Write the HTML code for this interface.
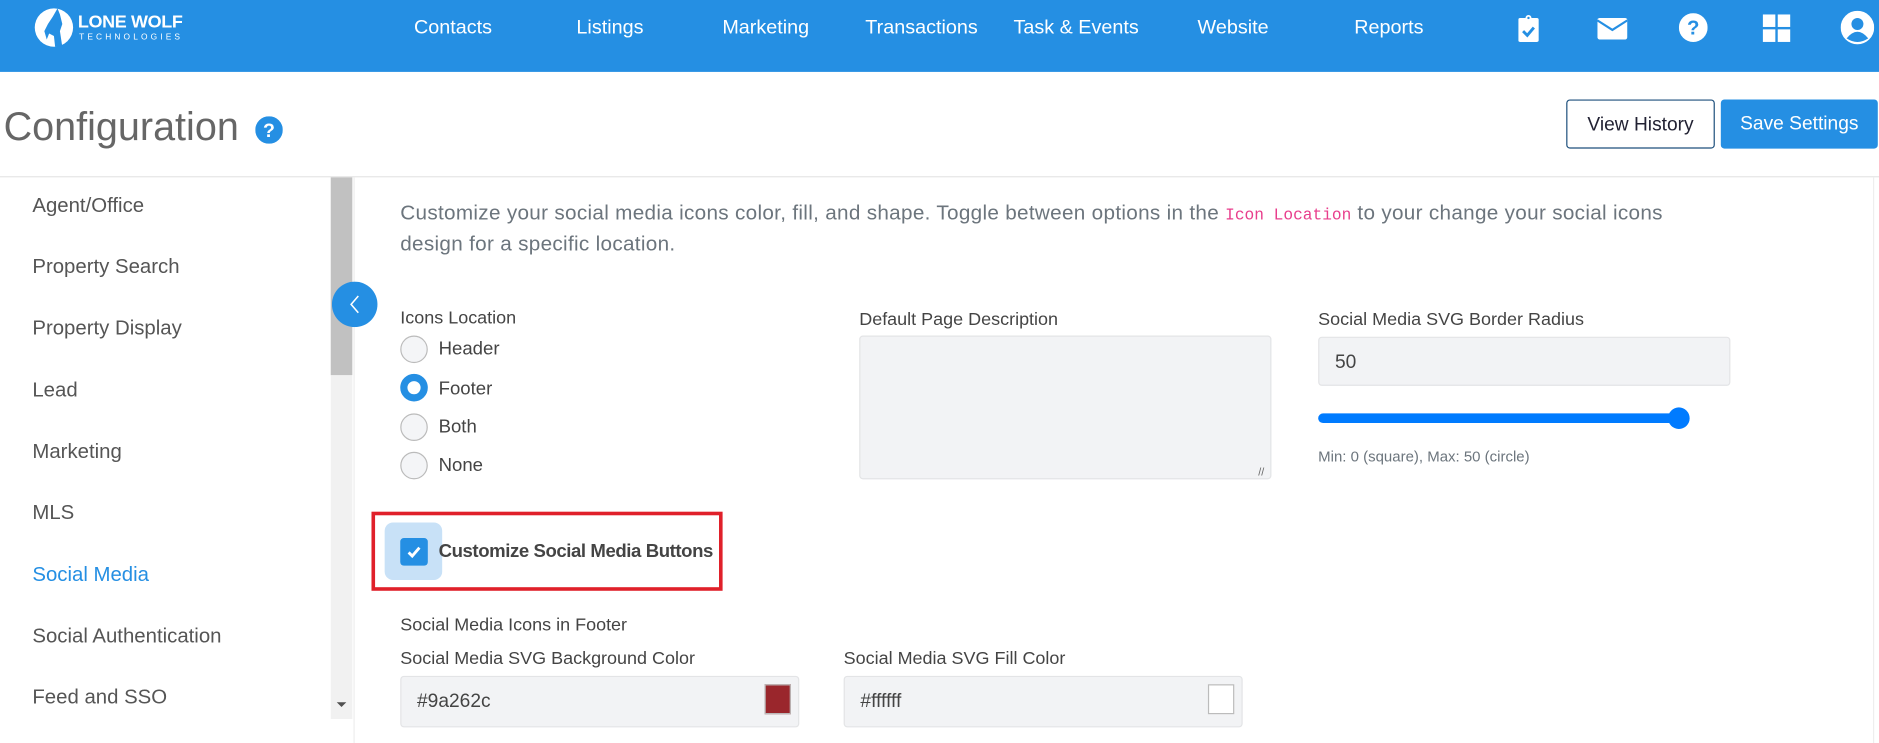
<!DOCTYPE html>
<html><head><meta charset="utf-8">
<style>
*{box-sizing:border-box;margin:0;padding:0}
html,body{width:1879px;height:743px;overflow:hidden;background:#fff}
#s{position:absolute;left:0;top:0;width:1568px;height:620px;transform:scale(1.19834);transform-origin:0 0;font-family:"Liberation Sans",sans-serif}
.a{position:absolute;white-space:nowrap}
.hdr{position:absolute;left:0;top:0;width:1568px;height:60px;background:#258fe3}
.nav{position:absolute;top:14px;color:#fff;font-size:16.5px;transform:translateX(-50%)}
.side{position:absolute;left:27px;font-size:17px;color:#555}
.radio{position:absolute;left:334px;width:23px;height:23px;border-radius:50%;border:1px solid #bbb;background:#f4f5f7}
.rl{position:absolute;left:366px;font-size:15.5px;color:#444}
.lbl{position:absolute;font-size:15px;color:#444}
.inp{position:absolute;background:#f2f3f5;border:1px solid #e3e4e6;border-radius:3px}
</style></head><body><div id="s">
<div class="hdr">
  <svg class="a" style="left:28px;top:6px" width="34" height="34" viewBox="0 0 34 34"><circle cx="17" cy="17" r="16" fill="#fff"/><path d="M20 1 L22 6 L24 14 L22 20 L24 33 L18 33 L17 24 L13 22 L11 27 L9 20 L12 14 L16 8 Z" fill="#258fe3"/></svg>
  <div class="a" style="left:65px;top:10px;color:#fff;font-size:15px;font-weight:bold;letter-spacing:-0.3px">LONE WOLF</div>
  <div class="a" style="left:66px;top:28px;color:#fff;font-size:7px;letter-spacing:2.6px">TECHNOLOGIES</div>
  <div class="nav" style="left:378px">Contacts</div>
  <div class="nav" style="left:509px">Listings</div>
  <div class="nav" style="left:639px">Marketing</div>
  <div class="nav" style="left:769px">Transactions</div>
  <div class="nav" style="left:898px">Task &amp; Events</div>
  <div class="nav" style="left:1029px">Website</div>
  <div class="nav" style="left:1159px">Reports</div>
  <svg class="a" style="left:1267px;top:12px" width="18" height="24" viewBox="0 0 18 24"><rect x="0" y="3" width="17" height="20" rx="1.5" fill="#fff"/><circle cx="8.5" cy="3" r="2.5" fill="#fff"/><circle cx="8.5" cy="3" r="1" fill="#258fe3"/><path d="M4 14 L7.5 17.5 L13 11" stroke="#258fe3" stroke-width="2.4" fill="none"/></svg>
  <svg class="a" style="left:1333px;top:15px" width="25" height="18" viewBox="0 0 25 18"><rect width="25" height="18" rx="2" fill="#fff"/><path d="M0 2 L12.5 10 L25 2" stroke="#258fe3" stroke-width="1.8" fill="none"/></svg>
  <svg class="a" style="left:1401px;top:11px" width="24" height="24" viewBox="0 0 24 24"><circle cx="12" cy="12" r="12" fill="#fff"/><text x="12" y="18" text-anchor="middle" font-family="Liberation Sans" font-weight="bold" font-size="17" fill="#258fe3">?</text></svg>
  <svg class="a" style="left:1471px;top:12px" width="23" height="23" viewBox="0 0 23 23"><rect width="10.5" height="10.5" fill="#fff"/><rect x="12.5" width="10.5" height="10.5" fill="#fff"/><rect y="12.5" width="10.5" height="10.5" fill="#fff"/><rect x="12.5" y="12.5" width="10.5" height="10.5" fill="#fff"/></svg>
  <svg class="a" style="left:1536px;top:9px" width="28" height="28" viewBox="0 0 28 28"><circle cx="14" cy="14" r="14" fill="#fff"/><circle cx="14" cy="11" r="5" fill="#258fe3"/><path d="M5 23 Q14 12 23 23 Q14 29 5 23Z" fill="#258fe3"/></svg>
</div>
<div class="a" style="left:3px;top:87px;font-size:33px;color:#666">Configuration</div>
<svg class="a" style="left:213px;top:97px" width="23" height="23" viewBox="0 0 24 24"><circle cx="12" cy="12" r="12" fill="#258fe3"/><text x="12" y="18" text-anchor="middle" font-family="Liberation Sans" font-weight="bold" font-size="17" fill="#fff">?</text></svg>
<div class="a" style="left:1307px;top:83px;width:124px;height:41px;border:1px solid #1d4f7c;border-radius:3px;font-size:16px;color:#223;text-align:center;line-height:41px">View History</div>
<div class="a" style="left:1436px;top:83px;width:131px;height:41px;background:#258fe3;border-radius:3px;font-size:16px;color:#fff;text-align:center;line-height:42px">Save Settings</div>
<div class="a" style="left:0;top:147px;width:1568px;height:1px;background:#e5e5e5"></div>
<div class="side" style="top:162px">Agent/Office</div>
<div class="side" style="top:213px">Property Search</div>
<div class="side" style="top:264px">Property Display</div>
<div class="side" style="top:316px">Lead</div>
<div class="side" style="top:367px">Marketing</div>
<div class="side" style="top:418px">MLS</div>
<div class="side" style="top:470px;color:#258fe3">Social Media</div>
<div class="side" style="top:521px">Social Authentication</div>
<div class="side" style="top:572px">Feed and SSO</div>
<div class="a" style="left:276px;top:148px;width:18px;height:452px;background:#f1f1f1"></div>
<div class="a" style="left:276px;top:148px;width:18px;height:165px;background:#c1c1c1"></div>
<div class="a" style="left:281px;top:586px;width:0;height:0;border-left:4px solid transparent;border-right:4px solid transparent;border-top:4px solid #505050"></div>
<div class="a" style="left:295px;top:148px;width:1px;height:472px;background:#eee"></div>
<div class="a" style="left:1563px;top:148px;width:1px;height:472px;background:#eee"></div>
<svg class="a" style="left:277px;top:235px" width="38" height="38" viewBox="0 0 38 38"><circle cx="19" cy="19" r="19" fill="#258fe3"/><path d="M22 12 L16 19 L22 26" stroke="#fff" stroke-width="1.3" fill="none"/></svg>
<div class="a" style="left:334px;top:167px;font-size:17.3px;color:#6c757d;letter-spacing:0.25px">Customize your social media icons color, fill, and shape. Toggle between options in the <span style="font-family:'Liberation Mono',monospace;font-size:13.5px;color:#e83e8c;letter-spacing:0">Icon Location</span> to your change your social icons</div>
<div class="a" style="left:334px;top:193px;font-size:17.3px;color:#6c757d;letter-spacing:0.25px">design for a specific location.</div>
<div class="lbl" style="left:334px;top:257px">Icons Location</div>
<div class="radio" style="top:280px"></div><div class="rl" style="top:283px">Header</div>
<div class="radio" style="top:312px;border:6.5px solid #258fe3;background:#fff"></div><div class="rl" style="top:316px">Footer</div>
<div class="radio" style="top:345px"></div><div class="rl" style="top:348px">Both</div>
<div class="radio" style="top:377px"></div><div class="rl" style="top:380px">None</div>
<div class="lbl" style="left:717px;top:258px">Default Page Description</div>
<div class="inp" style="left:717px;top:280px;width:344px;height:120px"></div>
<div class="a" style="left:1050px;top:389px;font-size:9px;color:#666">//</div>
<div class="lbl" style="left:1100px;top:258px">Social Media SVG Border Radius</div>
<div class="inp" style="left:1100px;top:281px;width:344px;height:41px"></div>
<div class="a" style="left:1114px;top:294px;font-size:16px;color:#444">50</div>
<div class="a" style="left:1100px;top:345px;width:308px;height:8px;border-radius:4px;background:#007bff"></div>
<div class="a" style="left:1392px;top:340px;width:18px;height:18px;border-radius:50%;background:#007bff"></div>
<div class="a" style="left:1100px;top:374px;font-size:12.5px;color:#6c757d">Min: 0 (square), Max: 50 (circle)</div>
<div class="a" style="left:310px;top:427px;width:293px;height:66px;border:3px solid #e0202a"></div>
<div class="a" style="left:321px;top:436px;width:48px;height:48px;border-radius:7px;background:#c8e1f7"></div>
<div class="a" style="left:334px;top:449px;width:23px;height:23px;border-radius:3px;background:#258fe3"></div>
<svg class="a" style="left:334px;top:449px" width="23" height="23" viewBox="0 0 23 23"><path d="M7 12 L10 15 L16 8" stroke="#fff" stroke-width="2.4" fill="none"/></svg>
<div class="a" style="left:366px;top:452px;font-size:15.5px;color:#444;font-weight:bold;letter-spacing:-0.35px">Customize Social Media Buttons</div>
<div class="lbl" style="left:334px;top:513px">Social Media Icons in Footer</div>
<div class="lbl" style="left:334px;top:541px">Social Media SVG Background Color</div>
<div class="lbl" style="left:704px;top:541px">Social Media SVG Fill Color</div>
<div class="inp" style="left:334px;top:564px;width:333px;height:43px"></div>
<div class="a" style="left:348px;top:577px;font-size:16px;color:#444">#9a262c</div>
<div class="a" style="left:638px;top:571px;width:22px;height:25px;background:#9a262c;border:1px solid #bbb"></div>
<div class="inp" style="left:704px;top:564px;width:333px;height:43px"></div>
<div class="a" style="left:718px;top:577px;font-size:16px;color:#444">#ffffff</div>
<div class="a" style="left:1008px;top:571px;width:22px;height:25px;background:#fff;border:1px solid #bbb"></div>
</div></body></html>
